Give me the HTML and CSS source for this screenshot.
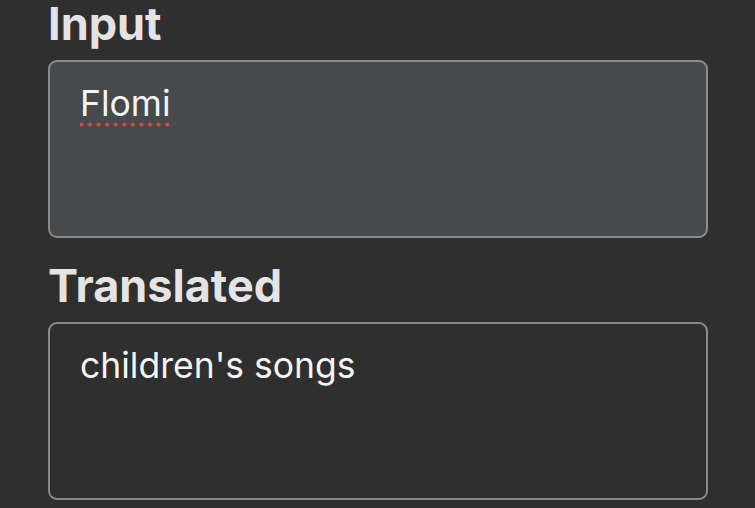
FILE: index.html
```html
<!DOCTYPE html>
<html>
<head>
<meta charset="utf-8">
<link rel="stylesheet" href="styles.css">
</head>
<body>
<main class="panel">
  <section class="field">
    <h2 class="label">Input</h2>
    <div class="box box-input"><span class="misspelled">Flomi</span></div>
  </section>
  <section class="field field-out">
    <h2 class="label">Translated</h2>
    <div class="box box-output">children's songs</div>
  </section>
</main>
</body>
</html>
```
FILE: styles.css
```css
html, body {
  margin: 0;
  padding: 0;
  background: #2f2f2f;
}
body {
  width: 755px;
  height: 508px;
  overflow: hidden;
  font-family: Inter, "Liberation Sans", sans-serif;
}
.panel {
  display: flex;
  flex-direction: column;
  padding-left: 48px;
}
.field {
  display: flex;
  flex-direction: column;
  gap: 12px;
}
.field-out {
  margin-top: 24px;
}
.label {
  margin: 0;
  font-size: 45px;
  line-height: 48px;
  font-weight: 700;
  color: #e4e4e4;
  letter-spacing: 0;
}
.box {
  box-sizing: border-box;
  width: 660px;
  height: 178px;
  border: 2px solid #8b8b8b;
  border-radius: 9px;
  padding: 21px 30px 0;
  font-size: 35.5px;
  line-height: 42px;
  color: #f4f4f4;
}
.box-input {
  background: #464a4d;
}
.box-output {
  background: #2f2f2f;
}
.misspelled {
  padding-bottom: 2px;
  background-image: radial-gradient(circle, #d04b3e 1.8px, transparent 2.3px);
  background-size: 8.6px 5px;
  background-repeat: repeat-x;
  background-position: -3px 100%;
}
```
